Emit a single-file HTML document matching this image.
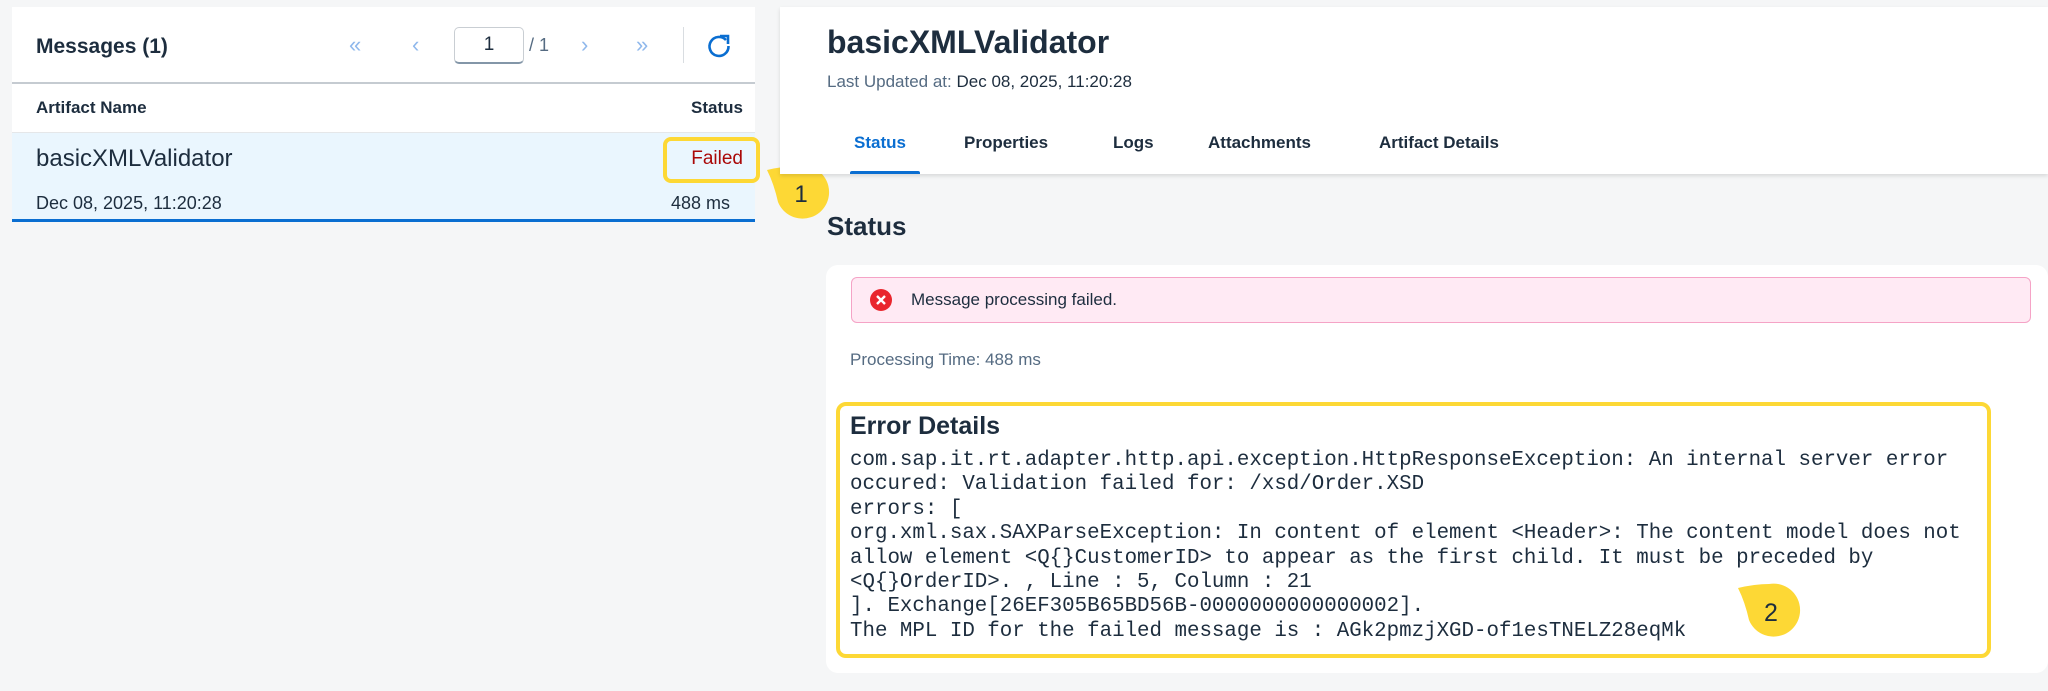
<!DOCTYPE html>
<html><head><meta charset="utf-8"><style>
*{box-sizing:border-box;margin:0;padding:0}
body{width:2048px;height:691px;background:#f5f6f7;font-family:"Liberation Sans",sans-serif;color:#1d2d3e;position:relative;overflow:hidden}
.a{position:absolute;white-space:nowrap}
.lp{position:absolute;left:12px;top:7px;width:743px;height:215px;background:#fff}
.rp{position:absolute;left:780px;top:7px;width:1268px;height:167px;background:#fff;box-shadow:0 2px 4px rgba(0,0,0,.12)}
.nav{color:#8fb8ec;font-size:22px}
.card{position:absolute;left:826px;top:265px;width:1222px;height:408px;background:#fff;border-radius:12px}
.mono{font-family:"Liberation Mono",monospace;font-size:20.8px;line-height:24.4px;color:#1d2d3e;white-space:pre}
</style></head><body>
<div class="lp"></div>
<div class="a" style="left:36px;top:35px;font-size:21px;font-weight:bold">Messages (1)</div>
<div class="a nav" style="left:349px;top:32px">«</div>
<div class="a nav" style="left:412px;top:32px">‹</div>
<div class="a" style="left:454px;top:27px;width:70px;height:37px;border:1px solid #c9ced3;border-bottom:2px solid #8396a8;border-radius:5px;text-align:center;font-size:19px;line-height:34px">1</div>
<div class="a" style="left:529px;top:35px;font-size:18px;color:#556b82">/ 1</div>
<div class="a nav" style="left:581px;top:32px">›</div>
<div class="a nav" style="left:636px;top:32px">»</div>
<div class="a" style="left:683px;top:27px;width:1px;height:36px;background:#d9dde1"></div>
<svg class="a" style="left:706px;top:33px" width="26" height="26" viewBox="0 0 26 26"><path d="M20 7 A9.5 9.5 0 1 0 22.5 13" fill="none" stroke="#0a6ed1" stroke-width="2.6"/><path d="M14 3 L22 3 L22 11" fill="none" stroke="#0a6ed1" stroke-width="2.6"/></svg>
<div class="a" style="left:12px;top:82px;width:743px;height:2px;background:#c5cbd1"></div>
<div class="a" style="left:36px;top:98px;font-size:17px;font-weight:bold">Artifact Name</div>
<div class="a" style="left:685px;top:98px;font-size:17px;font-weight:bold;width:58px;text-align:right">Status</div>
<div class="a" style="left:12px;top:132px;width:743px;height:88px;background:#eaf6fe;border-top:1px solid #e5e7e9"></div>
<div class="a" style="left:12px;top:219px;width:743px;height:3px;background:#0a6ed1"></div>
<div class="a" style="left:36px;top:145px;font-size:24px">basicXMLValidator</div>
<div class="a" style="left:36px;top:193px;font-size:18px">Dec 08, 2025, 11:20:28</div>
<div class="a" style="left:640px;top:193px;font-size:18px;width:90px;text-align:right">488 ms</div>
<div class="a" style="left:663px;top:137px;width:97px;height:46px;border:4px solid #fdd835;border-radius:8px"></div>
<div class="a" style="left:670px;top:148px;font-size:19px;color:#aa0808;width:73px;text-align:right">Failed</div>
<svg class="a" style="left:764px;top:162px" width="70" height="60" viewBox="0 0 70 60"><path d="M3 8 Q20 4 34 4 A26.5 26.5 0 1 1 14 40 Q10 22 3 8Z" fill="#fdd835"/><text x="37" y="40" font-family="Liberation Sans" font-size="24" text-anchor="middle" fill="#1d2d3e">1</text></svg>

<div class="rp"></div>
<div class="a" style="left:827px;top:24px;font-size:32px;font-weight:bold">basicXMLValidator</div>
<div class="a" style="left:827px;top:72px;font-size:17px;color:#556b82">Last Updated at: <span style="color:#1d2d3e">Dec 08, 2025, 11:20:28</span></div>
<div class="a" style="left:854px;top:133px;font-size:17px;font-weight:bold;color:#0a6ed1">Status</div>
<div class="a" style="left:964px;top:133px;font-size:17px;font-weight:bold">Properties</div>
<div class="a" style="left:1113px;top:133px;font-size:17px;font-weight:bold">Logs</div>
<div class="a" style="left:1208px;top:133px;font-size:17px;font-weight:bold">Attachments</div>
<div class="a" style="left:1379px;top:133px;font-size:17px;font-weight:bold">Artifact Details</div>
<div class="a" style="left:850px;top:171px;width:70px;height:3px;background:#0a6ed1;border-radius:2px 2px 0 0"></div>
<div class="a" style="left:827px;top:211px;font-size:26px;font-weight:bold">Status</div>
<div class="card"></div>
<div class="a" style="left:851px;top:277px;width:1180px;height:46px;background:#ffeaf4;border:1px solid #f5a3c6;border-radius:6px"></div>
<svg class="a" style="left:869px;top:288px" width="24" height="24" viewBox="0 0 24 24"><circle cx="12" cy="12" r="11" fill="#e9262d"/><path d="M8 8L16 16M16 8L8 16" stroke="#fff" stroke-width="2.4"/></svg>
<div class="a" style="left:911px;top:290px;font-size:17px">Message processing failed.</div>
<div class="a" style="left:850px;top:350px;font-size:17px;color:#556b82">Processing Time: 488 ms</div>
<div class="a" style="left:836px;top:402px;width:1155px;height:256px;border:4px solid #fdd835;border-radius:10px"></div>
<div class="a" style="left:850px;top:412px;font-size:25px;font-weight:bold">Error Details</div>
<div class="a mono" style="left:850px;top:449px">com.sap.it.rt.adapter.http.api.exception.HttpResponseException: An internal server error
occured: Validation failed for: /xsd/Order.XSD
errors: [
org.xml.sax.SAXParseException: In content of element &lt;Header&gt;: The content model does not
allow element &lt;Q{}CustomerID&gt; to appear as the first child. It must be preceded by
&lt;Q{}OrderID&gt;. , Line : 5, Column : 21
]. Exchange[26EF305B65BD56B-0000000000000002].
The MPL ID for the failed message is : AGk2pmzjXGD-of1esTNELZ28eqMk</div>
<svg class="a" style="left:1735px;top:580px" width="70" height="60" viewBox="0 0 70 60"><path d="M3 8 Q20 4 34 4 A26.5 26.5 0 1 1 14 40 Q10 22 3 8Z" fill="#fdd835"/><text x="36" y="41" font-family="Liberation Sans" font-size="25" text-anchor="middle" fill="#1d2d3e">2</text></svg>
</body></html>
